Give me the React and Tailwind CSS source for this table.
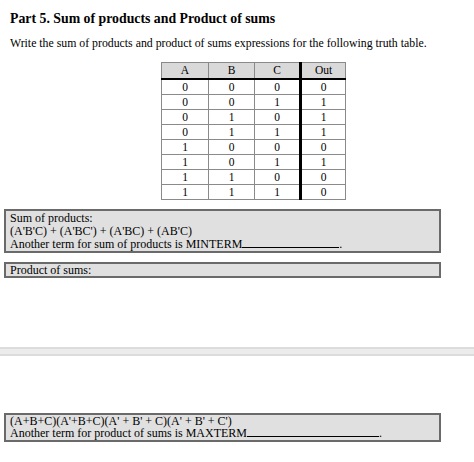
import React from "react";

const rows = [
  [0, 0, 0, 0],
  [0, 0, 1, 1],
  [0, 1, 0, 1],
  [0, 1, 1, 1],
  [1, 0, 0, 0],
  [1, 0, 1, 1],
  [1, 1, 0, 0],
  [1, 1, 1, 0],
];

export default function App() {
  return (
    <div
      className="w-[474px] h-[462px] bg-white text-black overflow-hidden"
      style={{ fontFamily: '"Liberation Serif", "Times New Roman", serif' }}
    >
      <div className="pl-[10px] pt-[10px]">
        <div className="text-[13.8px] leading-[18px] font-bold">
          Part 5. Sum of products and Product of sums
        </div>
        <div className="mt-[8px] text-[11.8px] leading-[14px]">
          Write the sum of products and product of sums expressions for the following truth table.
        </div>
      </div>

      <div className="mt-[12px] pl-[161px]">
        <table className="border-collapse text-[11.5px] leading-[14px] text-center">
          <thead>
            <tr className="bg-[#d9d9d9] h-[16px]">
              <th className="font-normal w-[47px] border border-[#8a8a8a] border-b-2 border-b-black p-0">A</th>
              <th className="font-normal w-[46px] border border-[#8a8a8a] border-b-2 border-b-black p-0">B</th>
              <th className="font-normal w-[46px] border border-[#8a8a8a] border-b-2 border-b-black border-r-[3px] border-r-black p-0">C</th>
              <th className="font-normal w-[45px] border border-[#8a8a8a] border-b-2 border-b-black p-0">Out</th>
            </tr>
          </thead>
          <tbody>
            {rows.map((r, i) => (
              <tr key={i} className="h-[15px]">
                <td className="border border-[#8a8a8a] p-0">{r[0]}</td>
                <td className="border border-[#8a8a8a] p-0">{r[1]}</td>
                <td className="border border-[#8a8a8a] border-r-[3px] border-r-black p-0">{r[2]}</td>
                <td className="border border-[#8a8a8a] p-0">{r[3]}</td>
              </tr>
            ))}
          </tbody>
        </table>
      </div>

      <div className="mt-[9px] ml-[4px] w-[437px] border-2 border-[#6a6a6a] bg-[#e0e0e0] pl-[4px] text-[12px] leading-[13px] pt-[1px]">
        <div>Sum of products:</div>
        <div>(A'B'C) + (A'BC') + (A'BC) + (AB'C)</div>
        <div>
          Another term for sum of products is MINTERM
          <span className="inline-block w-[97px] border-b border-black align-baseline"></span>.
        </div>
      </div>

      <div className="mt-[9px] ml-[4px] w-[437px] border-2 border-[#6a6a6a] bg-[#e0e0e0] pl-[4px] text-[12px] leading-[12px]">
        Product of sums:
      </div>

      <div className="mt-[69px] w-full h-[9px] bg-[#ececec] border-y-2 border-[#dcdcdc]"></div>

      <div className="mt-[57px] ml-[4px] w-[437px] border-2 border-[#6a6a6a] bg-[#e0e0e0] pl-[4px] text-[12px] leading-[12.5px]">
        <div>(A+B+C)(A'+B+C)(A' + B' + C)(A' + B' + C')</div>
        <div>
          Another term for product of sums is MAXTERM
          <span className="inline-block w-[132px] border-b border-black align-baseline"></span>.
        </div>
      </div>
    </div>
  );
}
